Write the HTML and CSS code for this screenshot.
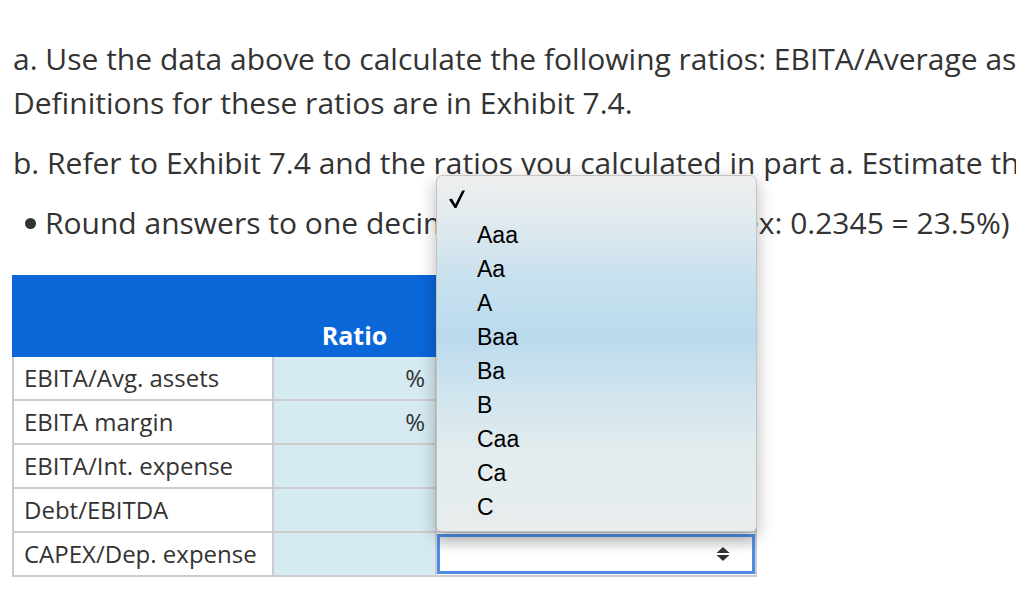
FILE: index.html
```html
<!DOCTYPE html>
<html lang="en">
<head>
    <meta charset="UTF-8">
    <title>Ratios and rating</title>
    <link rel="stylesheet" href="styles.css">
</head>
<body>
    <div class="page">
        <p class="question">a. Use the data above to calculate the following ratios: EBITA/Average assets, EBITA margin,<br>Definitions for these ratios are in Exhibit 7.4.</p>
        <p class="question">b. Refer to Exhibit 7.4 and the ratios you calculated in part a. Estimate the rating for the company.</p>
        <ul class="notes">
            <li>Round answers to one decimal place as percents (ex: 0.2345 = 23.5%)</li>
        </ul>

        <table class="ratio-table">
            <thead>
                <tr>
                    <th class="col-name"></th>
                    <th class="col-ratio">Ratio</th>
                    <th class="col-rating">Rating</th>
                </tr>
            </thead>
            <tbody>
                <tr>
                    <td class="name">EBITA/Avg. assets</td>
                    <td class="value">%</td>
                    <td class="rating"></td>
                </tr>
                <tr>
                    <td class="name">EBITA margin</td>
                    <td class="value">%</td>
                    <td class="rating"></td>
                </tr>
                <tr>
                    <td class="name">EBITA/Int. expense</td>
                    <td class="value"></td>
                    <td class="rating"></td>
                </tr>
                <tr>
                    <td class="name">Debt/EBITDA</td>
                    <td class="value"></td>
                    <td class="rating"></td>
                </tr>
                <tr>
                    <td class="name">CAPEX/Dep. expense</td>
                    <td class="value"></td>
                    <td class="rating">
                        <div class="select-box">
                            <svg class="select-arrows" width="14" height="16" viewBox="0 0 14 16">
                                <path d="M7 1 L13.5 7 L0.5 7 Z" fill="#333"/>
                                <path d="M0.5 9 L13.5 9 L7 15 Z" fill="#333"/>
                            </svg>
                        </div>
                    </td>
                </tr>
            </tbody>
        </table>

        <!-- open option list of the rating select -->
        <ul class="option-menu">
            <li class="option checked">
                <svg class="check" width="18" height="22" viewBox="0 0 18 22">
                    <path d="M1 11.5 L3.8 10.4 L7.4 16.2 L14.2 2.5 L17 2.5 L8.4 20 L6.6 20 Z" fill="#000"/>
                </svg>
            </li>
            <li class="option">Aaa</li>
            <li class="option">Aa</li>
            <li class="option">A</li>
            <li class="option">Baa</li>
            <li class="option">Ba</li>
            <li class="option">B</li>
            <li class="option">Caa</li>
            <li class="option">Ca</li>
            <li class="option">C</li>
        </ul>
    </div>
</body>
</html>
```

FILE: styles.css
```css
* {
    margin: 0;
    padding: 0;
    box-sizing: border-box;
}

html, body {
    overflow: hidden;
}

body {
    font-family: 'Open Sans', 'Noto Sans', sans-serif;
    color: #333;
    background: #fff;
}

.page {
    position: relative;
    padding: 37px 0 0 13px;
    width: 1016px;
    height: 600px;
    overflow: hidden;
}

/* Question text */
.question {
    font-size: 30px;
    line-height: 44px;
    white-space: nowrap;
    margin-bottom: 16px;
}

.notes {
    list-style: none;
    font-size: 30px;
    line-height: 44px;
    white-space: nowrap;
}

.notes li {
    display: flex;
    align-items: center;
}

.notes li::before {
    content: "";
    flex-shrink: 0;
    width: 11px;
    height: 11px;
    border-radius: 50%;
    background: #333;
    margin: 0 9px 0 12px;
}

/* Ratio table */
.ratio-table {
    margin-top: 30px;
    margin-left: -1px;
    border-collapse: collapse;
    width: 745px;
    font-size: 24px;
}

.ratio-table th {
    background: #0b66d8;
    color: #fff;
    height: 80px;
    vertical-align: bottom;
    padding-bottom: 3px;
    font-size: 25px;
    font-weight: 700;
    border: 2px solid #0b66d8;
}

.col-name { width: 260px; }
.col-ratio { width: 163px; }

.ratio-table td {
    height: 44px;
    border: 2px solid #ccc;
    padding: 0 10px;
    line-height: 40px;
}

.ratio-table .value {
    background: #d5eaf1;
    text-align: right;
}

.ratio-table .rating {
    padding: 0;
}

.select-box {
    height: 40px;
    border: 3px solid #4f8ce8;
    background: linear-gradient(#e2e2e2, #fff 45%);
    display: flex;
    align-items: center;
    justify-content: flex-end;
    padding-right: 22px;
}

/* Dropdown list overlay */
.option-menu {
    position: absolute;
    left: 436px;
    top: 175px;
    width: 321px;
    height: 357px;
    list-style: none;
    padding: 8px 0;
    border: 1px solid #c4c4c4;
    border-radius: 6px;
    background: linear-gradient(to bottom, #efefef 0%, #dfe9ee 14%, #c6e0ee 30%, #bbdaee 45%, #cfe4ee 60%, #e3ecee 78%, #e8eded 100%);
    box-shadow: 0 6px 18px rgba(0, 0, 0, 0.28);
    font-family: 'Liberation Sans', Arial, sans-serif;
    font-size: 23px;
    color: #000;
}

.option {
    height: 34px;
    line-height: 34px;
    padding-left: 40px;
}

.option.checked {
    position: relative;
}

.check {
    position: absolute;
    left: 11px;
    top: 4px;
}
```
